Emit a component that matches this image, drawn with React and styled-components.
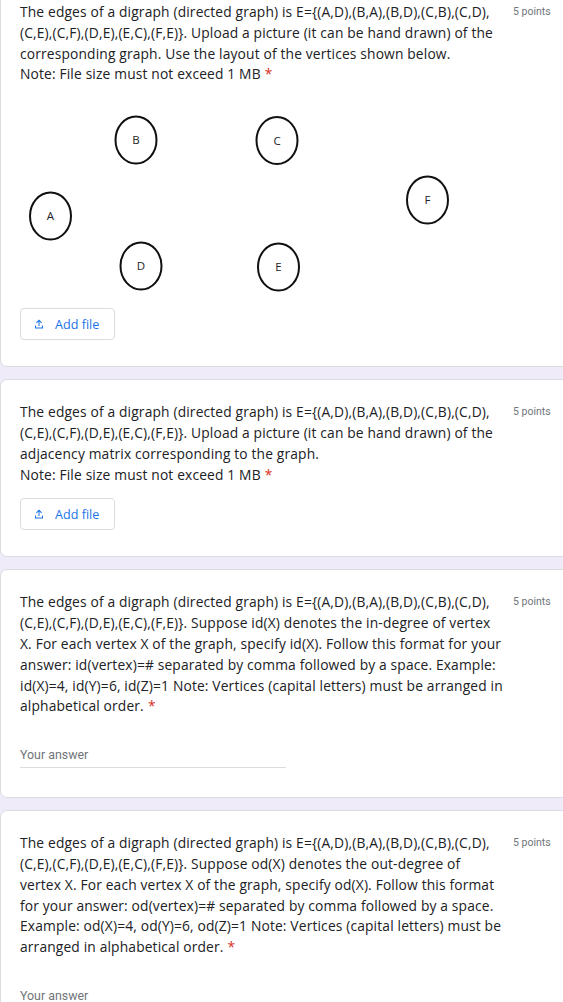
import React from 'react'
import styled, { createGlobalStyle } from 'styled-components'

const GlobalStyle = createGlobalStyle`
  html, body {
    margin: 0;
    padding: 0;
    background: #f0ebf8;
    overflow-x: hidden;
  }
  body {
    font-family: "Open Sans", Roboto, Arial, sans-serif;
    color: #202124;
  }
`

const Page = styled.div`
  display: flex;
  flex-direction: column;
  gap: 12px;
  margin-top: -21px;
  padding-bottom: 40px;
`

const Card = styled.section`
  background: #fff;
  border: 1px solid #dadce0;
  border-radius: 7px;
  width: calc(100% + 24px);
  box-sizing: border-box;
  padding: ${props => props.$pad || '22px 0 26px 19px'};
`

const Header = styled.div`
  display: flex;
  align-items: flex-start;
`

const Title = styled.div`
  width: 486px;
  font-size: 13.8px;
  line-height: 20.8px;
  letter-spacing: 0.15px;
  color: #202124;
`

const Line = styled.span`
  display: block;
  white-space: nowrap;
`

const Star = styled.span`
  color: #d93025;
  margin-left: 4px;
`

const Points = styled.div`
  margin-left: 7px;
  font-family: Roboto, Arial, sans-serif;
  font-size: 10.5px;
  line-height: 20.8px;
  color: #70757a;
  white-space: nowrap;
`

const Figure = styled.svg`
  display: block;
  margin-top: 14px;
  margin-bottom: 9px;
`

const AddButton = styled.button`
  display: flex;
  align-items: center;
  gap: 10px;
  height: 32px;
  width: 95px;
  box-sizing: border-box;
  padding: 0 0 0 12px;
  margin-top: ${props => props.$top || '0'};
  background: #fff;
  border: 1px solid #dadce0;
  border-radius: 4px;
  color: #1a73e8;
  font-family: "Open Sans", Roboto, Arial, sans-serif;
  font-size: 12.6px;
  cursor: pointer;
`

const Answer = styled.div`
  width: 266px;
  margin-top: 30px;
  padding-bottom: 5px;
  border-bottom: 1px solid #dadce0;
  font-family: Roboto, Arial, sans-serif;
  font-size: 12.4px;
  line-height: 15px;
  color: #70757a;
`

const UploadIcon = () => (
  <svg width="12" height="12" viewBox="0 0 24 24" fill="#1a73e8">
    <path d="M11 16V6.8l-3.6 3.6L6 9l6-6 6 6-1.4 1.4L13 6.8V16z" />
    <path d="M4 15h2v4h12v-4h2v6H4z" />
  </svg>
)

const nodes = [
  { id: 'B', x: 116, y: 41 },
  { id: 'C', x: 257, y: 41.5 },
  { id: 'A', x: 30.5, y: 117 },
  { id: 'F', x: 407.5, y: 101 },
  { id: 'D', x: 121, y: 167 },
  { id: 'E', x: 258.5, y: 168 },
]

const GraphLayout = () => (
  <Figure width="450" height="200" viewBox="0 0 450 200">
    {nodes.map(n => (
      <g key={n.id}>
        <ellipse cx={n.x} cy={n.y} rx="20.5" ry="23.5" fill="none" stroke="#111" strokeWidth="2" />
        <text
          x={n.x}
          y={n.y + 4}
          textAnchor="middle"
          fontSize="11.5"
          fontFamily="'Open Sans', sans-serif"
          fill="#222"
        >
          {n.id}
        </text>
      </g>
    ))}
  </Figure>
)

const first = 'The edges of a digraph (directed graph) is E={(A,D),(B,A),(B,D),(C,B),(C,D),'
const note = 'Note: File size must not exceed 1 MB'

const Question = ({ lines }) => (
  <Header>
    <Title>
      {lines.map((text, i) => (
        <Line key={i}>
          {text}
          {i === lines.length - 1 && <Star>*</Star>}
        </Line>
      ))}
    </Title>
    <Points>5 points</Points>
  </Header>
)

const App = () => {
  return (
    <Page>
      <GlobalStyle />

      <Card>
        <Question
          lines={[
            first,
            '(C,E),(C,F),(D,E),(E,C),(F,E)}. Upload a picture (it can be hand drawn) of the',
            'corresponding graph. Use the layout of the vertices shown below.',
            note,
          ]}
        />
        <GraphLayout />
        <AddButton>
          <UploadIcon />
          Add file
        </AddButton>
      </Card>

      <Card $pad="22px 0 26px 19px">
        <Question
          lines={[
            first,
            '(C,E),(C,F),(D,E),(E,C),(F,E)}. Upload a picture (it can be hand drawn) of the',
            'adjacency matrix corresponding to the graph.',
            note,
          ]}
        />
        <AddButton $top="13px">
          <UploadIcon />
          Add file
        </AddButton>
      </Card>

      <Card $pad="22px 0 29px 19px">
        <Question
          lines={[
            first,
            '(C,E),(C,F),(D,E),(E,C),(F,E)}. Suppose id(X) denotes the in-degree of vertex',
            'X. For each vertex X of the graph, specify id(X). Follow this format for your',
            'answer: id(vertex)=# separated by comma followed by a space. Example:',
            'id(X)=4, id(Y)=6, id(Z)=1 Note: Vertices (capital letters) must be arranged in',
            'alphabetical order.',
          ]}
        />
        <Answer>Your answer</Answer>
      </Card>

      <Card $pad="22px 0 29px 19px">
        <Question
          lines={[
            first,
            '(C,E),(C,F),(D,E),(E,C),(F,E)}. Suppose od(X) denotes the out-degree of',
            'vertex X. For each vertex X of the graph, specify od(X). Follow this format',
            'for your answer: od(vertex)=# separated by comma followed by a space.',
            'Example: od(X)=4, od(Y)=6, od(Z)=1 Note: Vertices (capital letters) must be',
            'arranged in alphabetical order.',
          ]}
        />
        <Answer>Your answer</Answer>
      </Card>
    </Page>
  )
}

export default App
